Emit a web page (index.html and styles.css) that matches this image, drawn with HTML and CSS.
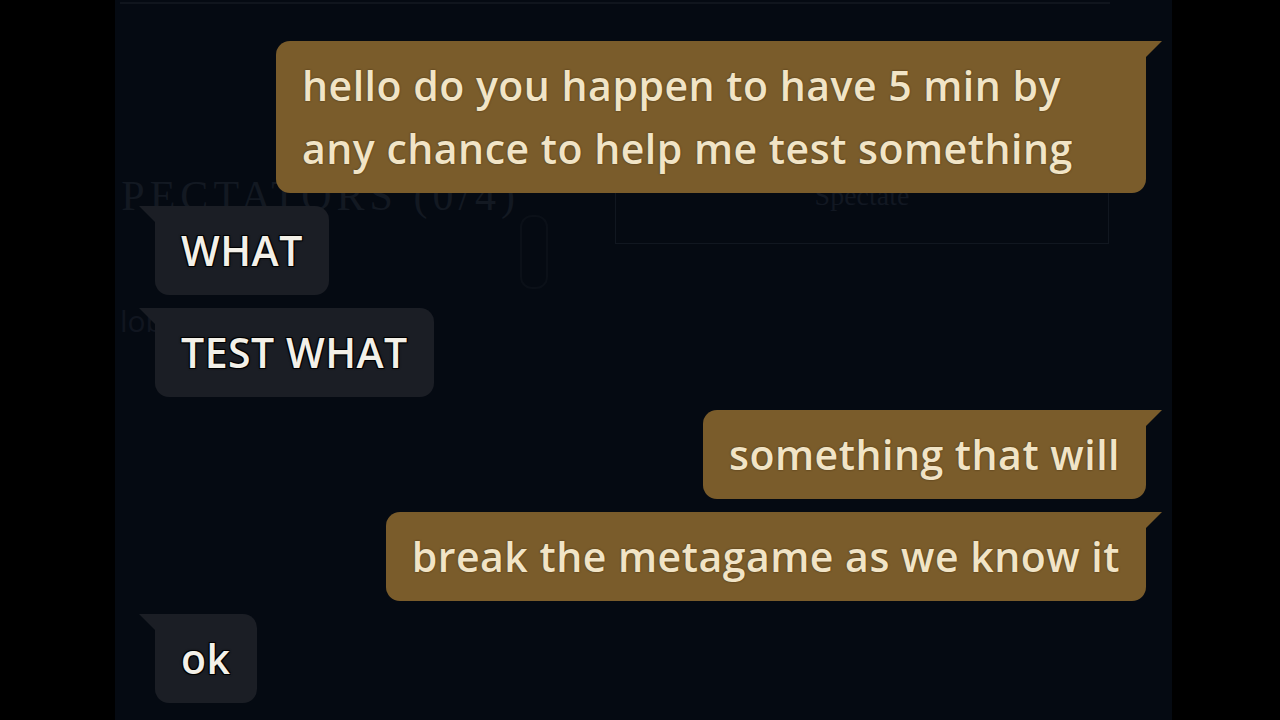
FILE: index.html
```html
<!DOCTYPE html>
<html lang="en">
<head>
  <meta charset="UTF-8">
  <title>Chat</title>
  <link rel="stylesheet" href="styles.css">
</head>
<body>

  <div class="panel">
    <div class="backdrop">
      <div class="top-rule"></div>
      <div class="spectators">SPECTATORS (0/4)</div>
      <div class="spectate-box">Spectate</div>
      <div class="ghost-pill"></div>
      <div class="lobby">lobby</div>
    </div>

    <div class="chat">
      <div class="msg sent">hello do you happen to have 5 min by any chance to help me test something</div>
      <div class="msg received">WHAT</div>
      <div class="msg received">TEST WHAT</div>
      <div class="msg sent">something that will</div>
      <div class="msg sent">break the metagame as we know it</div>
      <div class="msg received">ok</div>
    </div>
  </div>

</body>
</html>
```

FILE: styles.css
```css
body {
  margin: 0;
  background: #000;
  font-family: "Open Sans", Lato, sans-serif;
  display: flex;
  justify-content: flex-start;
}

.panel {
  position: relative;
  margin-left: 115px;
  width: 1057px;
  height: 720px;
  background: #050a12;
  overflow: hidden;
}

/* faint game client UI behind the chat */
.backdrop {
  position: absolute;
  inset: 0;
}

.top-rule {
  position: absolute;
  left: 5px;
  top: 2px;
  width: 990px;
  height: 2px;
  background: #10151d;
}

.spectators {
  position: absolute;
  left: -22px;
  top: 172px;
  font-family: "Liberation Serif", serif;
  font-size: 42px;
  letter-spacing: 5px;
  color: #131922;
}

.spectate-box {
  position: absolute;
  left: 500px;
  top: 170px;
  width: 492px;
  height: 72px;
  border: 1px solid #111720;
  color: #121822;
  font-family: "Liberation Serif", serif;
  font-size: 28px;
  text-align: center;
  line-height: 50px;
}

.ghost-pill {
  position: absolute;
  left: 405px;
  top: 215px;
  width: 24px;
  height: 70px;
  border: 2px solid #0b1018;
  border-radius: 12px;
}

.lobby {
  position: absolute;
  left: 5px;
  top: 300px;
  font-size: 30px;
  color: #111620;
}

.chat {
  position: relative;
  display: flex;
  flex-direction: column;
  gap: 13px;
  padding: 41px 26px 0 40px;
}

.msg {
  position: relative;
  box-sizing: border-box;
  max-width: 870px;
  font-size: 41px;
  font-weight: 600;
  letter-spacing: 0.5px;
  line-height: 63px;
  padding: 13px 26px;
  border-radius: 14px;
}

.msg.sent {
  align-self: flex-end;
  background: #7a5c2b;
  color: #f1e4c6;
  border-top-right-radius: 0;
  text-shadow: 0 0 2px rgba(40, 25, 5, 0.7);
}

.msg.sent::after {
  content: "";
  position: absolute;
  top: 0;
  right: -16px;
  border-top: 16px solid #7a5c2b;
  border-right: 16px solid transparent;
}

.msg.received {
  align-self: flex-start;
  background: #1b1e25;
  color: #f3f0e8;
  border-top-left-radius: 0;
  text-shadow: -1px -1px 0 #000, 1px -1px 0 #000, -1px 1px 0 #000, 1px 1px 0 #000, 0 0 3px #000;
}

.msg.received::before {
  content: "";
  position: absolute;
  top: 0;
  left: -16px;
  border-top: 16px solid #1b1e25;
  border-left: 16px solid transparent;
}
```
